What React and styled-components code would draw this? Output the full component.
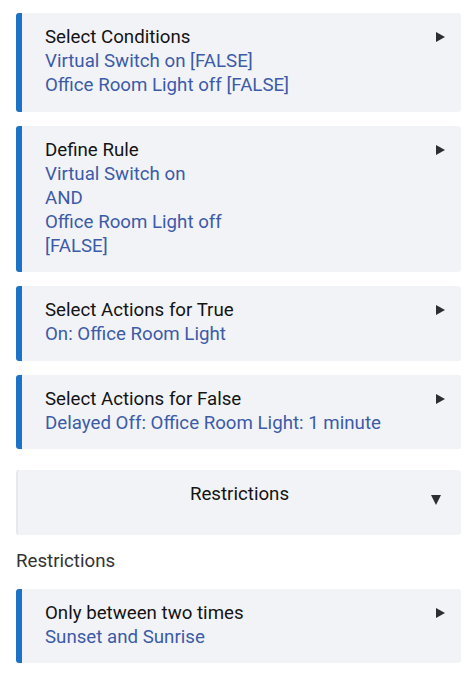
import React from "react";
import styled, { createGlobalStyle } from "styled-components";

const Global = createGlobalStyle`
	body {
		margin: 0;
		background: #ffffff;
		font-family: Roboto, "Noto Sans", sans-serif;
	}
`;

const Page = styled.div`
	padding: 13px 13px 16px 16px;
	display: flex;
	flex-direction: column;
`;

const Card = styled.div`
	display: flex;
	align-items: flex-start;
	background: #f2f3f7;
	border-left: 6px solid #1b72c6;
	border-radius: 3px;
	padding: 12px 16px 14.5px 23px;
	margin-bottom: 14px;
`;

const Body = styled.div`
	flex: 1;
	font-size: 18.7px;
	line-height: 24px;
`;

const Title = styled.div`
	color: #141414;
`;

const Line = styled.div`
	color: #3c5ba8;
`;

const Arrow = styled.div`
	width: 0;
	height: 0;
	margin-top: 7px;
	border-top: 5.5px solid transparent;
	border-bottom: 5.5px solid transparent;
	border-left: 9px solid #2e2e30;
`;

const SectionBox = styled.div`
	display: grid;
	grid-template-columns: 1fr auto 1fr;
	background: #f2f3f7;
	border-left: 2px solid #e6e8ec;
	border-radius: 3px;
	padding: 12px 20px 28.5px 20px;
	margin-top: 7px;
	font-size: 18.7px;
	line-height: 24px;
	color: #141414;
`;

const DownArrow = styled.div`
	justify-self: end;
	align-self: start;
	width: 0;
	height: 0;
	margin-top: 13px;
	border-left: 5.5px solid transparent;
	border-right: 5.5px solid transparent;
	border-top: 10px solid #2e2e30;
`;

const Label = styled.div`
	font-size: 18.7px;
	line-height: 24px;
	color: #333333;
	margin: 14px 0 16px 0;
`;

function Item({ title, lines }) {
	return (
		<Card>
			<Body>
				<Title>{title}</Title>
				{lines.map((l, i) => (
					<Line key={i}>{l}</Line>
				))}
			</Body>
			<Arrow />
		</Card>
	);
}

export default function App() {
	return (
		<Page>
			<Global />
			<Item
				title="Select Conditions"
				lines={["Virtual Switch on [FALSE]", "Office Room Light off [FALSE]"]}
			/>
			<Item
				title="Define Rule"
				lines={["Virtual Switch on", "AND", "Office Room Light off", "[FALSE]"]}
			/>
			<Item title="Select Actions for True" lines={["On: Office Room Light"]} />
			<Item
				title="Select Actions for False"
				lines={["Delayed Off: Office Room Light: 1 minute"]}
			/>
			<SectionBox>
				<div />
				<div>Restrictions</div>
				<DownArrow />
			</SectionBox>
			<Label>Restrictions</Label>
			<Item title="Only between two times" lines={["Sunset and Sunrise"]} />
		</Page>
	);
}
